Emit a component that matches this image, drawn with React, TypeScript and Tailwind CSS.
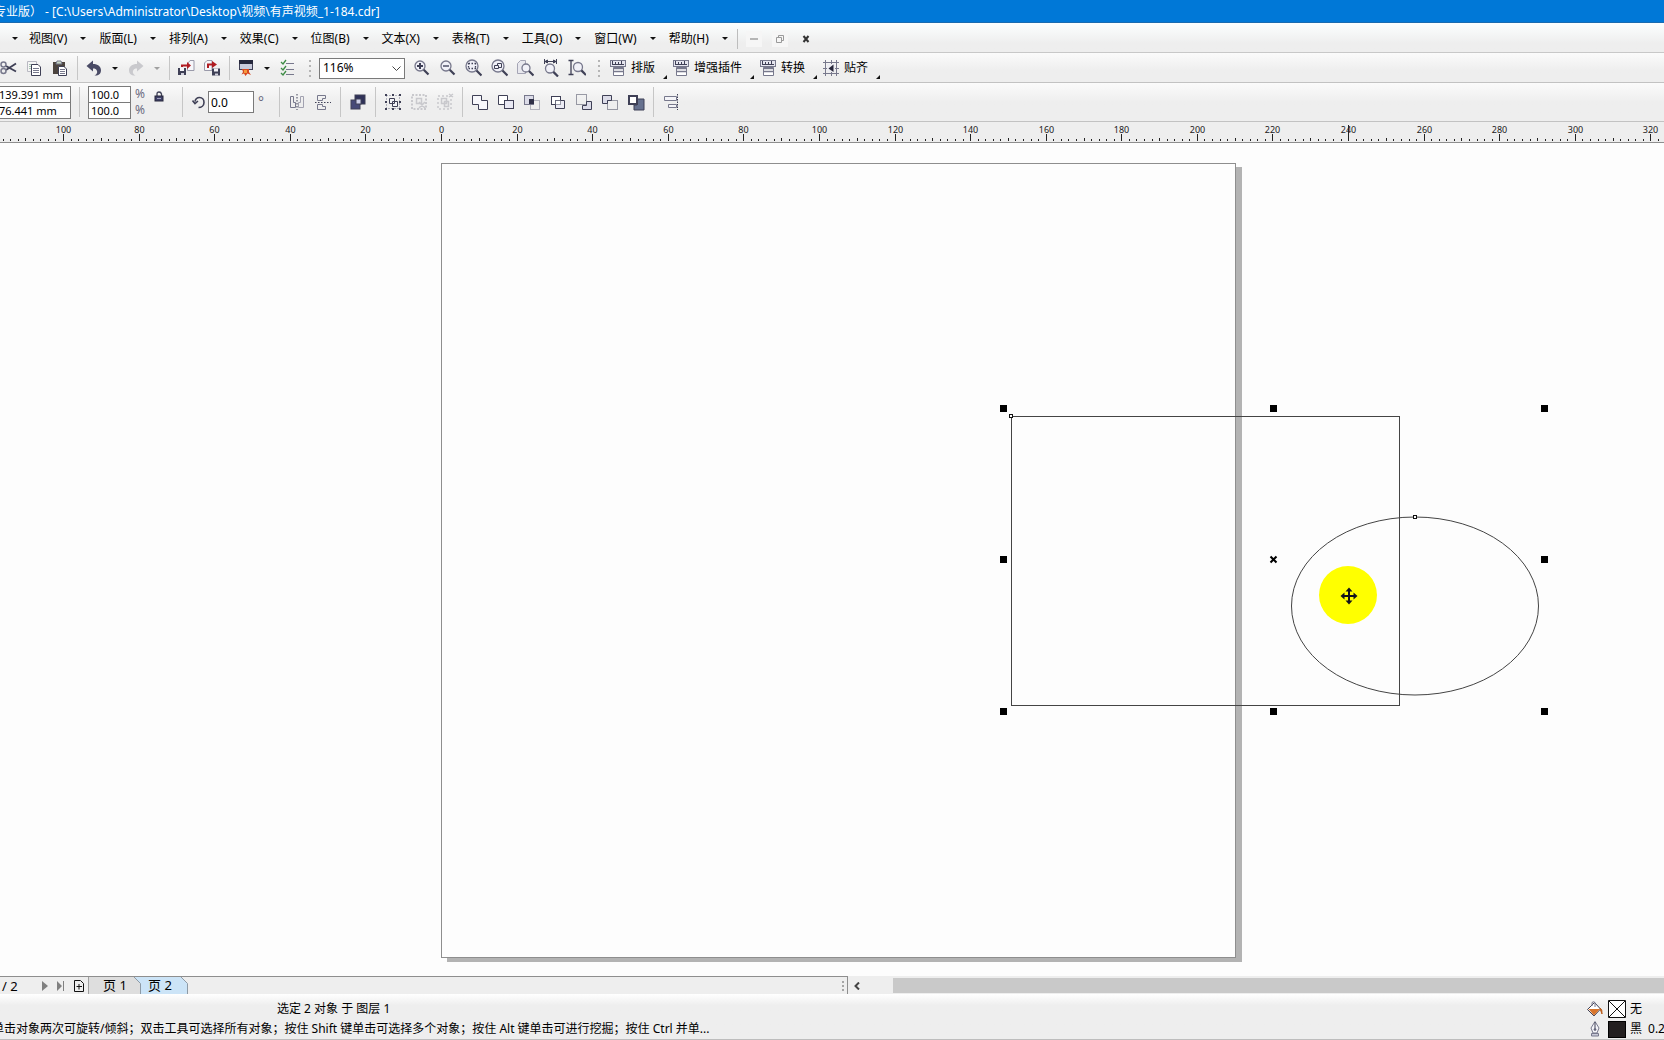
import React from "react";

const INK = "#3f4056";
const SOFT = "#77788c";
const PALE = "#c9c9cd";

const MENUS = [
  "视图(V)",
  "版面(L)",
  "排列(A)",
  "效果(C)",
  "位图(B)",
  "文本(X)",
  "表格(T)",
  "工具(O)",
  "窗口(W)",
  "帮助(H)",
];

type Drawing = { children: React.ReactNode };

function Icon({ children }: Drawing) {
  return (
    <svg width="18" height="18" viewBox="0 0 18 18" fill="none" stroke={INK} strokeWidth="1" className="shrink-0" aria-hidden="true">
      {children}
    </svg>
  );
}

function Tool({ label, children, disabled }: Drawing & { label: string; disabled?: boolean }) {
  return (
    <button type="button" aria-label={label} disabled={disabled} className="flex h-6 w-[26px] shrink-0 items-center justify-center">
      <Icon>{children}</Icon>
    </button>
  );
}

function Arrow({ pale }: { pale?: boolean }) {
  return (
    <svg width="6" height="3" viewBox="0 0 6 3" aria-hidden="true">
      <path d="M0 0H6L3 3Z" fill={pale ? "#a0a0a0" : "#111"} />
    </svg>
  );
}

function DropArrow({ label, pale }: { label: string; pale?: boolean }) {
  return (
    <button type="button" aria-label={label} className="flex h-6 w-4 shrink-0 items-center justify-center">
      <Arrow pale={pale} />
    </button>
  );
}

function Sep() {
  return (
    <div className="flex h-full w-2 shrink-0 justify-center py-0.5">
      <div className="w-px bg-[#c6c6c6]" />
    </div>
  );
}

function WideSep() {
  return (
    <div className="flex h-full w-[9px] shrink-0 justify-center py-1">
      <div className="w-px bg-[#c6c6c6]" />
    </div>
  );
}

function Grip() {
  return (
    <div className="flex w-[18px] shrink-0 flex-col items-center gap-[3px]">
      {[0, 1, 2, 3].map((i) => (
        <div key={i} className="size-0.5 bg-[#b5b5b5]" />
      ))}
    </div>
  );
}

function Lens({ cx = 8, cy = 7, r = 5 }: { cx?: number; cy?: number; r?: number }) {
  const k = r * 0.75;
  return (
    <>
      <circle cx={cx} cy={cy} r={r} fill="#f1f1f8" stroke={SOFT} strokeWidth="1.3" />
      <path d={`M${cx + k} ${cy + k}L${cx + r + 3.5} ${cy + r + 3.5}`} stroke={INK} strokeWidth="2.2" />
    </>
  );
}

function Floppy({ x, y }: { x: number; y: number }) {
  return (
    <>
      <rect x={x} y={y} width="8" height="7" fill={INK} stroke="none" />
      <rect x={x + 2} y={y} width="4" height="3" fill="#f4f4f8" stroke="none" />
      <rect x={x + 3} y={y + 5} width="3" height="2" fill="#d0d0dc" stroke="none" />
    </>
  );
}

function PluginGlyph() {
  return (
    <Icon>
      <rect x="1.5" y="1.5" width="15" height="6" fill="#e6e6ef" stroke={SOFT} />
      <path d="M3.5 2V5.5M6.5 3V5.5M9.5 3V5.5M12.5 2V5.5M3 5.5H15" stroke={INK} />
      <path d="M4.5 8.5H14.5V16.5H4.5Z" fill="#fff" stroke={SOFT} />
      <path d="M4 9.5H15M5 12.5H14" stroke={SOFT} strokeWidth="1.5" />
    </Icon>
  );
}

function SnapGlyph() {
  return (
    <Icon>
      <path d="M1 3.5H17M1 9.5H17M1 14.5H17M3.5 1V17M9.5 1V17M14.5 1V17" stroke={SOFT} />
      <rect x="5" y="5" width="8" height="8" fill="#ececf2" stroke="none" />
      <path d="M11.5 5.5V13L6.5 9.5Z" fill="#26263a" stroke="none" />
    </Icon>
  );
}

function PluginButton({ label, children }: Drawing & { label: string }) {
  return (
    <button type="button" className="relative flex h-[30px] shrink-0 items-center gap-1 pr-4 pl-px text-xs whitespace-nowrap">
      {children}
      {label}
      <svg width="4" height="4" viewBox="0 0 4 4" className="absolute right-1 bottom-1" aria-hidden="true">
        <path d="M4 0V4H0Z" fill="#111" />
      </svg>
    </button>
  );
}

function TitleBar() {
  return (
    <header className="flex h-[23px] items-center overflow-hidden border-b border-[#1a6bb0] bg-[#0078d7] pt-0.5 text-white">
      <h1 className="-ml-1.5 text-xs whitespace-nowrap">
        专业版） - [C:\Users\Administrator\Desktop\视频\有声视频_1-184.cdr]
      </h1>
    </header>
  );
}

function MenuBar() {
  return (
    <nav className="flex h-[30px] items-center border-b border-[#c8c8c8] bg-gradient-to-b from-[#fcffff] to-[#eeeeee] to-70% pt-0.5 text-xs" aria-label="菜单">
      <div className="flex w-[29px] shrink-0 justify-center">
        <Arrow />
      </div>
      {MENUS.map((m) => (
        <button key={m} type="button" className="flex shrink-0 items-center whitespace-nowrap">
          {m}
          <span className="flex w-8 justify-center">
            <Arrow />
          </span>
        </button>
      ))}
      <div className="-ml-1 h-5 w-px shrink-0 bg-[#bdbdbd]" />
      <div className="flex shrink-0 items-center gap-[10px] pl-2">
        <button type="button" aria-label="最小化" className="flex size-4 items-center justify-center bg-[#f6f6f6]">
          <span className="h-0.5 w-2 bg-[#b5b5b5]" />
        </button>
        <button type="button" aria-label="还原" className="flex size-4 items-center justify-center bg-[#f6f6f6]">
          <svg width="8" height="8" viewBox="0 0 8 8" fill="none" stroke="#9a9a9a" aria-hidden="true">
            <path d="M2.5 2V0.5H7.5V5.5H6M0.5 2.5H5.5V7.5H0.5Z" />
          </svg>
        </button>
        <button type="button" aria-label="关闭" className="flex size-4 items-center justify-center">
          <svg width="8" height="8" viewBox="0 0 8 8" fill="none" stroke="#333" strokeWidth="2" aria-hidden="true">
            <path d="M1.5 1L6.5 7M6.5 1L1.5 7" />
          </svg>
        </button>
      </div>
    </nav>
  );
}

function StandardBar() {
  return (
    <div className="flex h-[30px] items-center overflow-hidden border-b border-[#c2c2c2] bg-gradient-to-b from-[#fbfbfb] to-[#eeeeee] to-60% pt-px" role="toolbar" aria-label="标准">
      <div className="-ml-[5px] flex h-full items-center">
        <Tool label="剪切">
          <path d="M7 7L17 12.5M7 11L17 4.5" stroke={INK} strokeWidth="1.8" />
          <circle cx="4.5" cy="5.5" r="2.5" stroke={SOFT} strokeWidth="1.5" />
          <circle cx="4.5" cy="12" r="2.5" stroke={SOFT} strokeWidth="1.5" />
        </Tool>
        <Tool label="复制">
          <path d="M2.5 2.5H11.5V12.5H2.5Z" fill="#f5f5f5" stroke="#b9b9c2" />
          <path d="M4 5.5H10M4 7.5H10M4 9.5H10" stroke="#a9c7b4" />
          <path d="M6.5 5.5H13L15.5 8V16.5H6.5Z" fill="#fff" stroke={INK} />
          <path d="M8 9.5H14M8 11.5H14M8 13.5H14" stroke={SOFT} />
        </Tool>
        <Tool label="粘贴">
          <rect x="2" y="3" width="12" height="12" fill="#4c443e" stroke="none" />
          <path d="M5 5L6 2H10L11 5Z" fill="#c8d8c4" stroke={SOFT} />
          <path d="M7.5 7.5H13L15.5 10V16.5H7.5Z" fill="#fff" stroke={INK} />
          <path d="M9 10.5H14M9 12.5H14M9 14.5H14" stroke={SOFT} />
        </Tool>
        <Sep />
        <Tool label="撤消">
          <path d="M1.500 7L8 1.500V5C13 5 16 7.500 16 11.500C16 14 14.500 16 12 16.500H9.500C12 15 12.500 13.500 12 12C11.500 10 10 9.500 8 9.500V12.500Z" fill="#4a4b66" stroke="none" />
        </Tool>
        <DropArrow label="撤消列表" />
        <Tool label="重做" disabled>
          <path d="M16.500 7L10 1.500V5C5 5 2 7.500 2 11.500C2 14 3.500 16 6 16.500H8.500C6 15 5.500 13.500 6 12C6.500 10 8 9.500 10 9.500V12.500Z" fill={PALE} stroke="none" />
        </Tool>
        <DropArrow label="重做列表" pale />
        <Sep />
        <Tool label="导入">
          <path d="M10.500 5L13 1.500H17V11.500H10.500Z" fill="#f6f6fa" stroke="#9a9aaa" />
          <Floppy x={1} y={9} />
          <path d="M4 8V5.500H10V3L14 6.500L10 10V7.500H6V8Z" fill="#b01c22" stroke="none" />
        </Tool>
        <Tool label="导出">
          <path d="M1.500 4L4 1.500H9V11.500H1.500Z" fill="#f6f6fa" stroke="#9a9aaa" />
          <Floppy x={9} y={9.500} />
          <path d="M4 9V4.500H9V2L14 5.500L9 9V6.500H6V9Z" fill="#b01c22" stroke="none" />
        </Tool>
        <Sep />
        <Tool label="应用程序启动器">
          <rect x="2.500" y="1.500" width="13" height="9" fill="#c9cbdc" stroke={INK} />
          <rect x="2" y="1" width="14" height="4" fill="#26273c" stroke="none" />
          <path d="M5 10H12V13L14 16L10.500 14.500L8.500 17L7 14.500L4.500 15.500L6 13Z" fill="#d8481f" stroke="none" />
          <path d="M7 11H10V14H7Z" fill="#f59a3c" stroke="none" />
        </Tool>
        <DropArrow label="应用程序列表" />
        <Tool label="选项">
          <path d="M7 4.500H15M7 10.500H15M7 15.500H15" stroke={SOFT} />
          <path d="M2 3L4 5L7 1M2 9L4 11L7 7M2 14L4 16L7 12" stroke="#3d8c45" strokeWidth="1.300" />
        </Tool>
        <Grip />
        <div className="relative w-[86px]">
          <select aria-label="缩放级别" defaultValue="116%" className="block h-[21px] w-full appearance-none border border-[#7a7a7a] bg-white pl-[3px] text-xs leading-4 outline-none">
            <option>116%</option>
            <option>100%</option>
            <option>200%</option>
          </select>
          <svg width="9" height="6" viewBox="0 0 9 6" fill="none" stroke="#444" className="pointer-events-none absolute top-2 right-1" aria-hidden="true">
            <path d="M0.500 0.500L4.500 4.500L8.500 0.500" />
          </svg>
        </div>
        <div className="flex pl-[3px]">
          <Tool label="放大">
            <Lens />
            <path d="M5 7H11M8 4V10" stroke={INK} strokeWidth="2" />
          </Tool>
          <Tool label="缩小">
            <Lens />
            <path d="M5 7H11" stroke={SOFT} strokeWidth="2" />
          </Tool>
          <Tool label="缩放选定范围">
            <Lens r={6} />
            <path d="M4.500 4.500H12M4.500 9.500H12M4.500 4V10M11.500 4V10" stroke={INK} strokeWidth="1.300" strokeDasharray="1.500 1.500" />
          </Tool>
          <Tool label="缩放全部对象">
            <Lens r={6} />
            <path d="M4.500 6.500H8.500V9.500H4.500ZM7.500 6V4.500H11.500V8.500H9" stroke={INK} />
          </Tool>
          <Tool label="显示页面">
            <path d="M1.500 4.500L4.500 1.500H9.500V14.500H1.500Z" fill="#e8e8ee" stroke="#a5a5b5" />
            <Lens cx={10} cy={9} r={4} />
          </Tool>
          <Tool label="按页宽显示">
            <path d="M3 2.500H14M2.500 0V5M14.500 0V5" stroke={INK} />
            <path d="M5.500 1L3 2.500L5.500 4ZM11.500 1L14 2.500L11.500 4Z" fill={INK} />
            <Lens cx={8} cy={9.500} r={4.500} />
          </Tool>
          <Tool label="按页高显示">
            <path d="M3 2V15M0.500 1.500H5.500M0.500 15.500H5.500" stroke={INK} strokeWidth="1.300" />
            <Lens cx={10} cy={8} r={4.500} />
          </Tool>
        </div>
        <Grip />
        <PluginButton label="排版"><PluginGlyph /></PluginButton>
        <PluginButton label="增强插件"><PluginGlyph /></PluginButton>
        <PluginButton label="转换"><PluginGlyph /></PluginButton>
        <PluginButton label="贴齐"><SnapGlyph /></PluginButton>
      </div>
    </div>
  );
}

function NumberPair({ values, labels, box }: { values: string[]; labels: string[]; box: string }) {
  return (
    <div className={box}>
      <input aria-label={labels[0]} defaultValue={values[0]} className="block h-[17px] w-full border border-[#7a7a7a] bg-white px-0.5 text-[11px] outline-none" />
      <input aria-label={labels[1]} defaultValue={values[1]} className="-mt-px block h-[17px] w-full border border-[#7a7a7a] bg-white px-0.5 text-[11px] outline-none" />
    </div>
  );
}

function PropertyBar() {
  return (
    <div className="flex h-[39px] items-center overflow-hidden border-b border-[#c2c2c2] bg-gradient-to-b from-[#fbfbfb] to-[#eeeeee] to-50%" role="toolbar" aria-label="属性栏">
      <NumberPair values={["139.391 mm", "76.441 mm"]} labels={["宽度", "高度"]} box="-ml-1 w-[75px] shrink-0" />
      <div className="ml-1 flex h-full">
        <WideSep />
      </div>
      <NumberPair values={["100.0", "100.0"]} labels={["水平缩放", "垂直缩放"]} box="ml-1 w-[43px] shrink-0" />
      <div className="ml-1 w-3 text-xs leading-4 text-[#6b6c80]">
        <div>%</div>
        <div>%</div>
      </div>
      <button type="button" aria-label="锁定比率" className="mb-3 ml-1 flex w-4 justify-center">
        <svg width="10" height="11" viewBox="0 0 10 11" fill="none" aria-hidden="true">
          <path d="M3 5V3Q3 1 5 1T7.500 3V5" stroke={INK} strokeWidth="1.300" />
          <rect x="1" y="5" width="8" height="5" fill="#3f4068" stroke="#26263a" />
          <path d="M3 7.500H7" stroke="#9fa0bb" />
        </svg>
      </button>
      <div className="ml-[11px] flex h-full">
        <WideSep />
      </div>
      <label htmlFor="rotation" className="ml-0.5 flex w-[18px] justify-center">
        <span className="sr-only">旋转角度</span>
        <svg width="13" height="13" viewBox="0 0 13 13" fill="none" stroke={INK} strokeWidth="1.600" aria-hidden="true">
          <path d="M3 5.500C3.500 3 5.500 1.500 7.500 1.500C10.500 1.500 12 4 12 6.500C12 9.500 9.500 11.500 6.500 11.500" />
          <path d="M0.500 4.500L3 7.500L6 5" />
        </svg>
      </label>
      <input id="rotation" defaultValue="0.0" className="ml-px h-[22px] w-[46px] border border-[#7a7a7a] bg-white px-0.5 text-xs outline-none" />
      <span className="ml-1 w-[17px] text-sm leading-4 text-[#6b6c80]">°</span>
      <WideSep />
      <Tool label="水平镜像">
        <path d="M9 1V17" stroke={INK} strokeDasharray="1.500 1.500" />
        <path d="M2.500 3.500H5.500V9.500H7.500V14.500H2.500Z" stroke={SOFT} />
        <path d="M15.500 3.500H12.500V9.500H10.500V14.500H15.500Z" stroke="#a2a2b0" />
      </Tool>
      <Tool label="垂直镜像">
        <path d="M1 9.500H17" stroke={INK} strokeDasharray="1.500 1.500" />
        <path d="M3.500 2.500H11.500V5.500H8.500V7.500H3.500Z" stroke={SOFT} />
        <path d="M3.500 16.500H11.500V13.500H8.500V11.500H3.500Z" stroke={SOFT} />
      </Tool>
      <WideSep />
      <Tool label="顺序">
        <rect x="6" y="2" width="10" height="9" fill="#2f3158" stroke={INK} />
        <rect x="2" y="7" width="9" height="9" fill="#464a78" stroke={INK} />
        <rect x="7" y="6" width="5" height="5" fill="#cfd2ea" stroke={INK} />
      </Tool>
      <WideSep />
      <Tool label="群组">
        <path d="M2.500 2.500H15.500V15.500H2.500Z" stroke={SOFT} strokeDasharray="1 2" />
        <path d="M1 1H3V3H1ZM15 1H17V3H15ZM1 15H3V17H1ZM15 15H17V17H15ZM8 1H10V3H8ZM8 15H10V17H8ZM1 8H3V10H1ZM15 8H17V10H15Z" fill={INK} stroke="none" />
        <path d="M5.500 5.500H10.500V10.500H5.500ZM8.500 8.500H13.500V13.500H8.500Z" fill="#f4f4f8" />
      </Tool>
      <Tool label="取消群组" disabled>
        <path d="M2 2H16V16H2Z" stroke={PALE} strokeWidth="2" strokeDasharray="2 1.500" />
        <path d="M6.500 5.500H11.500V10.500H6.500ZM9 9L15 15M15 9L9 15" stroke={PALE} strokeWidth="1.500" />
      </Tool>
      <Tool label="取消全部群组" disabled>
        <path d="M2 3H15V16H2Z" stroke={PALE} strokeWidth="1.500" strokeDasharray="2 2" />
        <path d="M5.500 5.500H10.500V10.500H5.500ZM8.500 8.500H12.500V13.500H8.500ZM13 1L17 4M17 1L13 4" stroke={PALE} strokeWidth="1.500" />
      </Tool>
      <WideSep />
      <Tool label="焊接">
        <path d="M1.500 2.500H10.500V7.500H16.500V16.500H7.500V11.500H1.500Z" fill="#f7f7fb" stroke={INK} />
      </Tool>
      <Tool label="修剪">
        <path d="M1.500 2.500H10.500V7.500H7.500V11.500H1.500Z" fill="#fff" stroke={INK} />
        <rect x="7.500" y="7.500" width="9" height="8" fill="#e9e9f3" stroke={INK} />
      </Tool>
      <Tool label="相交">
        <rect x="1.500" y="2.500" width="9" height="9" fill="#dcdce8" stroke={SOFT} />
        <rect x="7.500" y="7.500" width="9" height="9" stroke={SOFT} strokeDasharray="1 1" />
        <rect x="6" y="6" width="5" height="5" fill="#2f3047" stroke="none" />
      </Tool>
      <Tool label="简化">
        <rect x="2.500" y="3.500" width="9" height="8" fill="#fff" stroke={INK} />
        <path d="M6.500 7.500H15.500V15.500H6.500Z" fill="#ececf5" stroke={INK} />
        <path d="M6.500 7.500H11.500V11.500H6.500Z" fill="#fff" stroke={INK} strokeDasharray="1 1" />
      </Tool>
      <Tool label="移除后面对象">
        <path d="M11.500 8.500H16.500V16.500H7.500V12.500H11.500Z" fill="#dcdce8" stroke={INK} />
        <rect x="1.500" y="1.500" width="10" height="10" stroke={INK} strokeDasharray="1 1" />
      </Tool>
      <Tool label="移除前面对象">
        <path d="M1.500 2.500H10.500V7.500H6.500V10.500H1.500Z" fill="#dcdce8" stroke={INK} />
        <rect x="6.500" y="7.500" width="10" height="9" stroke={INK} strokeDasharray="1 1" />
      </Tool>
      <Tool label="创建边界">
        <path d="M10 6H17V17H7V12H10Z" fill="#66718f" stroke={INK} />
        <rect x="2" y="3" width="8" height="8" fill="#fff" stroke={INK} strokeWidth="2" />
      </Tool>
      <WideSep />
      <Tool label="对齐和分布">
        <path d="M15.500 1V17" stroke={INK} strokeDasharray="1.500 1" />
        <path d="M2.500 3.500H14.500V7.500H2.500ZM6.500 11.500H14.500V14.500H6.500Z" fill="#f4f4f8" stroke={SOFT} />
      </Tool>
    </div>
  );
}

const ORIGIN = 441.5;
const UNIT = 96 / 25.4;

function Ruler() {
  const ticks: React.ReactNode[] = [];
  for (let v = -116; v <= 700; v += 2) {
    const x = Math.round(ORIGIN + v * UNIT - 0.5);
    const h = v % 20 === 0 ? 7 : v % 10 === 0 ? 3 : 2;
    ticks.push(<rect key={v} x={x} y={19 - h} width="1" height={h} fill="#222" />);
    if (v % 20 === 0) {
      ticks.push(
        <text key={`t${v}`} x={x + 0.5} y="11" textAnchor="middle" fontSize="9" fill="#222">
          {Math.abs(v)}
        </text>,
      );
    }
  }
  return (
    <div className="h-[21px] overflow-hidden border-b border-[#8e8e8e] bg-[#eeeeee]">
      <svg width="100%" height="20" aria-label="标尺">
        {ticks}
        <rect x="1348" y="3" width="1" height="12" fill="#222" />
      </svg>
    </div>
  );
}

const HANDLES = [
  [1000, 262],
  [1270, 262],
  [1541, 262],
  [1000, 413],
  [1541, 413],
  [1000, 565],
  [1270, 565],
  [1541, 565],
];

function Canvas() {
  return (
    <main className="relative min-h-0 flex-1 overflow-hidden bg-[#fdfdfd]">
      <div className="absolute top-5 left-[441px] size-[795px] border border-[#8e8e8e] bg-[#fdfdfd] shadow-[6px_4px_0_#b3b3b3]" />
      <svg width="100%" height="100%" className="absolute inset-0" fill="none" aria-label="绘图">
        <circle cx="1348" cy="452" r="29" fill="#ffff00" />
        <rect x="1011.500" y="273.500" width="388" height="289" stroke="#444" />
        <ellipse cx="1415" cy="463" rx="123.500" ry="89" stroke="#444" />
        <rect x="1009.500" y="271.500" width="3" height="3" fill="#fff" stroke="#111" />
        <rect x="1413.500" y="372.500" width="3" height="3" fill="#fff" stroke="#111" />
        {HANDLES.map(([x, y]) => (
          <rect key={`${x}-${y}`} x={x} y={y} width="7" height="7" fill="#000" />
        ))}
        <path d="M1270.500 413.500L1276.500 419.500M1276.500 413.500L1270.500 419.500" stroke="#000" strokeWidth="2" />
        <g transform="translate(1349 453)">
          <path d="M-7 0H7M0 -7V7" stroke="#14141c" strokeWidth="2" />
          <path d="M-8.500 0L-4.500 -3.500V3.500ZM8.500 0L4.500 -3.500V3.500ZM0 -8.500L-3.500 -4.500H3.500ZM0 8.500L-3.500 4.500H3.500Z" fill="#14141c" />
        </g>
      </svg>
    </main>
  );
}

function PageBar() {
  return (
    <div className="flex h-[18px] bg-[#eeeeee] text-[13px]">
      <div className="flex w-[848px] shrink-0 items-center overflow-hidden border-t border-r border-[#8e8e8e]">
        <span className="w-[37px] pl-0.5 leading-4">/ 2</span>
        <button type="button" aria-label="下一页" className="flex w-4 justify-center">
          <svg width="6" height="10" viewBox="0 0 6 10" aria-hidden="true">
            <path d="M0 0L6 5L0 10Z" fill="#808080" />
          </svg>
        </button>
        <button type="button" aria-label="最后一页" className="flex w-4 justify-center">
          <svg width="8" height="10" viewBox="0 0 8 10" aria-hidden="true">
            <path d="M0 0L5 5L0 10ZM6 0H7V10H6Z" fill="#808080" />
          </svg>
        </button>
        <button type="button" aria-label="添加页" className="flex w-[19px] justify-center">
          <svg width="10" height="12" viewBox="0 0 10 12" fill="none" stroke="#111" aria-hidden="true">
            <path d="M0.500 0.500H6.500L9.500 3.500V11.500H0.500ZM5 4V9.500M2.500 6.500H8" />
          </svg>
        </button>
        <button type="button" className="flex h-[17px] items-center border-l border-[#a0a0a0] bg-[#dedede] pl-[14px] leading-4">
          <span className="w-[31px] pb-0.5 text-left whitespace-nowrap">页 1</span>
          <svg width="7" height="17" viewBox="0 0 7 17" aria-hidden="true">
            <rect width="7" height="17" fill="#cce4f7" />
            <path d="M0 0L6 6V17H0Z" fill="#dedede" />
            <path d="M0 0L6.500 6.500V17" fill="none" stroke="#8e9aa5" />
          </svg>
        </button>
        <button type="button" aria-current="page" className="flex h-[17px] items-center leading-4">
          <span className="w-10 bg-[#cce4f7] pb-0.5 pl-[7px] text-left whitespace-nowrap">页 2</span>
          <svg width="7" height="17" viewBox="0 0 7 17" aria-hidden="true">
            <path d="M0 0L6.500 6.500V17H0Z" fill="#cce4f7" />
            <path d="M0 0L6.500 6.500V17" fill="none" stroke="#8e9aa5" />
          </svg>
        </button>
        <div className="mr-[3px] ml-auto flex flex-col gap-0.5">
          <div className="size-0.5 bg-[#a5a5a5]" />
          <div className="size-0.5 bg-[#a5a5a5]" />
          <div className="size-0.5 bg-[#a5a5a5]" />
        </div>
      </div>
      <div className="flex min-w-0 flex-1 items-center pt-px">
        <button type="button" aria-label="向左滚动" className="flex w-[17px] justify-center">
          <svg width="6" height="8" viewBox="0 0 6 8" fill="none" stroke="#444" strokeWidth="2" aria-hidden="true">
            <path d="M5 0.500L1.500 4L5 7.500" />
          </svg>
        </button>
        <div className="ml-7 h-[15px] flex-1 bg-[#c9c9c9]" />
      </div>
    </div>
  );
}

function StatusBar() {
  return (
    <footer className="flex h-[46px] justify-between overflow-hidden border-b border-[#bdbdbd] bg-gradient-to-b from-white to-[#eeeeee] to-25% pt-[5px] text-xs">
      <div className="-ml-2 leading-5 whitespace-nowrap">
        <p className="pl-[285px]">选定 2 对象 于 图层 1</p>
        <p>单击对象两次可旋转/倾斜；双击工具可选择所有对象；按住 Shift 键单击可选择多个对象；按住 Alt 键单击可进行挖掘；按住 Ctrl 并单...</p>
      </div>
      <div className="w-[78px] shrink-0 overflow-hidden leading-5 whitespace-nowrap">
        <div className="flex items-center gap-1">
          <svg width="18" height="16" viewBox="0 0 18 16" fill="none" className="shrink-0" aria-hidden="true">
            <path d="M8.500 1.500L14.500 8L8 15L1.500 8.500Z" fill="#fff" stroke={INK} />
            <path d="M2.500 8H14L8 14.500Z" fill="#d8742a" />
            <path d="M6 5V1.500Q7.500 0 9 1.500V6" stroke={SOFT} />
            <path d="M14 7Q16.500 8 16 13L14.500 9Z" fill="#d8742a" stroke="#b85c1c" />
          </svg>
          <svg width="18" height="18" viewBox="0 0 18 18" fill="#fff" stroke="#111" className="shrink-0" aria-hidden="true">
            <path d="M0.500 0.500H17.500V17.500H0.500ZM1 1L17 17M17 1L1 17" />
          </svg>
          无
        </div>
        <div className="flex items-center gap-1">
          <svg width="18" height="16" viewBox="0 0 18 16" fill="none" stroke={SOFT} className="shrink-0" aria-hidden="true">
            <path d="M9 0.500L13 7L11 12H7L5 7Z" fill="#f4f4f8" />
            <path d="M9 1V8" stroke={INK} />
            <circle cx="9" cy="8.500" r="1" fill={INK} />
            <path d="M5.500 12.500H12.500V15H5.500Z" fill="#c9cad8" />
          </svg>
          <span className="h-[17px] w-[18px] shrink-0 border border-black bg-[#231f20]" />
          <span>黑</span>
          <span className="pl-0.5">0.2</span>
        </div>
      </div>
    </footer>
  );
}

export default function App() {
  return (
    <div className="flex h-screen flex-col overflow-hidden bg-[#eeeeee] font-['Noto_Sans','Noto_Sans_CJK_SC',sans-serif] text-black">
      <TitleBar />
      <MenuBar />
      <StandardBar />
      <PropertyBar />
      <Ruler />
      <Canvas />
      <PageBar />
      <StatusBar />
    </div>
  );
}
